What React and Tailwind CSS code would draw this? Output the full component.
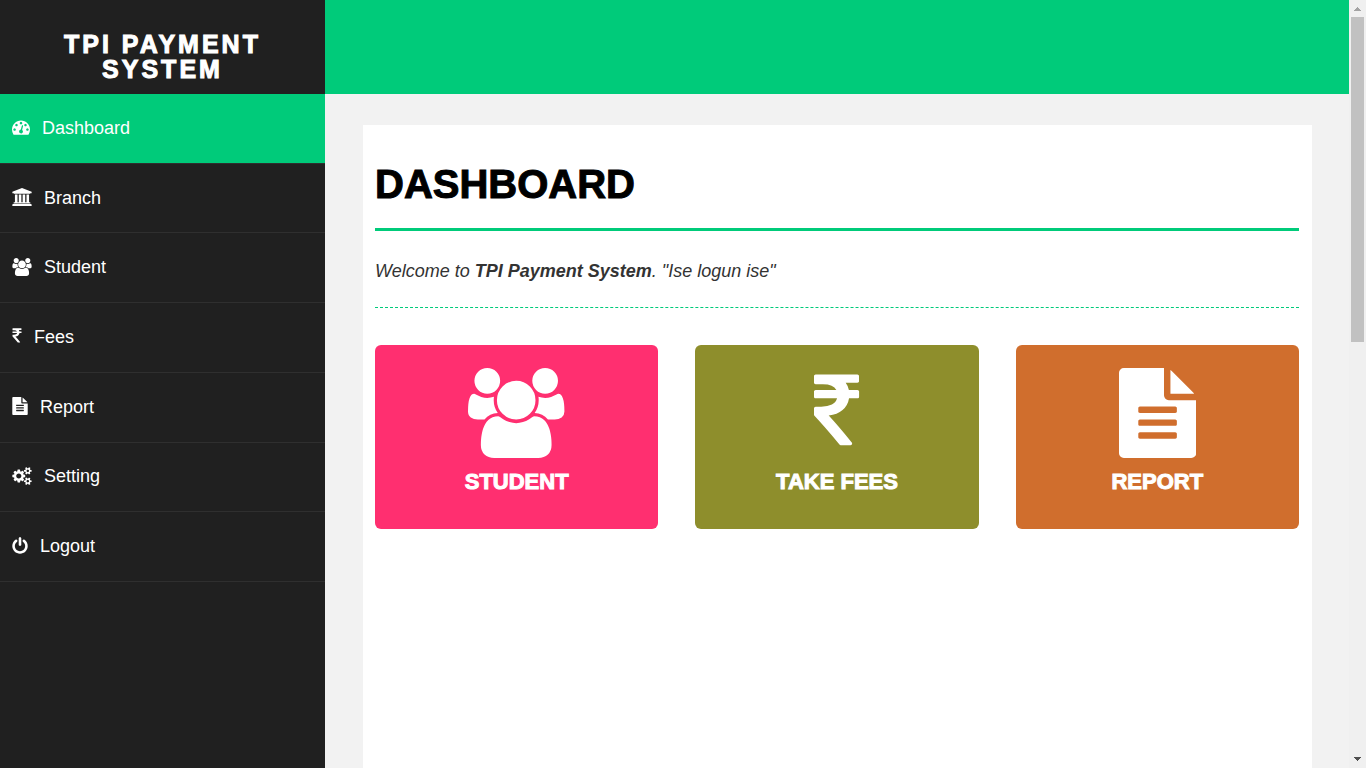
import React, { useState } from 'react';

const icons = {
  dashboard: {
    viewBox: '0 0 1792 1792',
    small: 'w-[18px]',
    path: 'M384 1152q0-53-37.5-90.5t-90.5-37.5-90.5 37.5-37.5 90.5 37.5 90.5 90.5 37.5 90.5-37.5 37.5-90.5zm192-448q0-53-37.5-90.5t-90.5-37.5-90.5 37.5-37.5 90.5 37.5 90.5 90.5 37.5 90.5-37.5 37.5-90.5zm428 481l101-382q6-26-7.5-48.5t-38.5-29.5-48 6.5-30 39.5l-101 382q-60 5-107 43.5t-63 98.5q-20 77 20 146t117 89 146-20 89-117q16-60-6-117t-72-91zm660-33q0-53-37.5-90.5t-90.5-37.5-90.5 37.5-37.5 90.5 37.5 90.5 90.5 37.5 90.5-37.5 37.5-90.5zm-640-640q0-53-37.5-90.5t-90.5-37.5-90.5 37.5-37.5 90.5 37.5 90.5 90.5 37.5 90.5-37.5 37.5-90.5zm448 192q0-53-37.5-90.5t-90.5-37.5-90.5 37.5-37.5 90.5 37.5 90.5 90.5 37.5 90.5-37.5 37.5-90.5zm320 448q0 261-141 483-19 29-54 29h-1402q-35 0-54-29-141-221-141-483 0-182 71-348t191-286 286-191 348-71 348 71 286 191 191 286 71 348z'
  },
  university: {
    viewBox: '0 0 1920 1792',
    small: 'w-5',
    path: 'M960 0l960 384v128h-128q0 26-20.5 45t-48.5 19h-1526q-28 0-48.5-19t-20.5-45h-128v-128zM256 640h256v768h128v-768h256v768h128v-768h256v768h128v-768h256v768h59q28 0 48.5 19t20.5 45v64h-1664v-64q0-26 20.5-45t48.5-19h59v-768zM1851 1600q28 0 48.5 19t20.5 45v128h-1920v-128q0-26 20.5-45t48.5-19h1782z'
  },
  users: {
    viewBox: '64 0 1920 1792',
    small: 'w-5',
    path: 'M657 896q-162 5-265 128h-134q-82 0-138-40.5t-56-118.5q0-353 124-353 6 0 43.5 21t97.5 42.5 119 21.5q67 0 133-23-5 37-5 66 0 139 81 256zm1071 637q0 120-73 189.500t-194 69.500h-874q-121 0-194-69.500t-73-189.500q0-53 3.500-103.500t14-109 26.500-108.500 43-97.500 62-81 85.500-53.500 111.500-20q10 0 43 21.500t73 48 107 48 135 21.500 135-21.500 107-48 73-48 43-21.500q61 0 111.500 20t85.500 53.500 62 81 43 97.500 26.500 108.500 14 109 3.500 103.500zm-1024-1277q0 106-75 181t-181 75-181-75-75-181 75-181 181-75 181 75 75 181zm704 384q0 159-112.5 271.500t-271.500 112.500-271.500-112.500-112.500-271.500 112.500-271.500 271.500-112.500 271.500 112.500 112.500 271.500zm576 225q0 78-56 118.500t-138 40.500h-134q-103-123-265-128 81-117 81-256 0-29-5-66 66 23 133 23 59 0 119-21.500t97.500-42.500 43.500-21q124 0 124 353zm-128-609q0 106-75 181t-181 75-181-75-75-181 75-181 181-75 181 75 75 181z'
  },
  rupee: {
    viewBox: '447 0 898 1792',
    small: 'w-[10px]',
    path: 'M1345 470v102q0 14-9 23t-23 9h-168q-23 144-129 234t-276 110q167 178 459 536 14 16 4 34-8 18-29 18h-195q-16 0-25-12-306-367-498-571-9-9-9-22v-127q0-13 9.5-22.5t22.5-9.5h112q132 0 212.5-43t102.5-125h-427q-14 0-23-9t-9-23v-102q0-14 9-23t23-9h413q-57-113-268-113h-145q-13 0-22.5-9.5t-9.5-22.5v-133q0-14 9-23t23-9h832q14 0 23 9t9 23v102q0 14-9 23t-23 9h-233q47 61 64 144h171q14 0 23 9t9 23z'
  },
  file: {
    viewBox: '128 0 1536 1792',
    small: 'w-4',
    path: 'M1596 476q14 14 28 36h-472v-472q22 14 36 28zm-476 164h544v1056q0 40-28 68t-68 28h-1344q-40 0-68-28t-28-68v-1600q0-40 28-68t68-28h800v544q0 40 28 68t68 28zm160 736v-64q0-14-9-23t-23-9h-704q-14 0-23 9t-9 23v64q0 14 9 23t23 9h704q14 0 23-9t9-23zm0-256v-64q0-14-9-23t-23-9h-704q-14 0-23 9t-9 23v64q0 14 9 23t23 9h704q14 0 23-9t9-23zm0-256v-64q0-14-9-23t-23-9h-704q-14 0-23 9t-9 23v64q0 14 9 23t23 9h704q14 0 23-9t9-23z'
  },
  cogs: {
    viewBox: '-64 0 1920 1792',
    small: 'w-5',
    path: 'M832 896q0-106-75-181t-181-75-181 75-75 181 75 181 181 75 181-75 75-181zm768 512q0-52-38-90t-90-38-90 38-38 90q0 53 37.5 90.5t90.5 37.5 90.5-37.5 37.5-90.5zm0-1024q0-52-38-90t-90-38-90 38-38 90q0 53 37.5 90.5t90.5 37.5 90.5-37.5 37.5-90.5zm-384 421v185q0 10-7 19.5t-16 10.5l-155 24q-11 35-32 76 34 48 90 115 7 11 7 20 0 12-7 19-23 30-82.5 89.5t-78.5 59.5q-11 0-21-7l-115-90q-37 19-77 31-11 108-23 155-7 24-30 24h-186q-11 0-20-7.5t-10-17.5l-23-153q-34-10-75-31l-118 89q-7 7-20 7-11 0-21-8-144-133-144-160 0-9 7-19 10-14 41-53t47-61q-23-44-35-82l-152-24q-10-1-17-9.5t-7-19.5v-185q0-10 7-19.5t16-10.5l155-24q11-35 32-76-34-48-90-115-7-11-7-20 0-12 7-20 22-30 82-89t79-59q11 0 21 7l115 90q34-18 77-32 11-108 23-154 7-24 30-24h186q11 0 20 7.5t10 17.5l23 153q34 10 75 31l118-89q8-7 20-7 11 0 21 8 144 133 144 160 0 8-7 19-12 16-42 54t-45 60q23 48 34 82l152 23q10 2 17 10.5t7 19.5zm640 533v140q0 16-149 31-12 27-30 52 51 113 51 138 0 4-4 7-122 71-124 71-8 0-46-47t-52-68q-20 2-30 2t-30-2q-14 21-52 68t-46 47q-2 0-124-71-4-3-4-7 0-25 51-138-18-25-30-52-149-15-149-31v-140q0-16 149-31 13-29 30-52-51-113-51-138 0-4 4-7 4-2 35-20t59-34 30-16q8 0 46 46.5t52 67.5q20-2 30-2t30 2q51-71 92-112l6-2q4 0 124 70 4 3 4 7 0 25-51 138 17 23 30 52 149 15 149 31zm0-1024v140q0 16-149 31-12 27-30 52 51 113 51 138 0 4-4 7-122 71-124 71-8 0-46-47t-52-68q-20 2-30 2t-30-2q-14 21-52 68t-46 47q-2 0-124-71-4-3-4-7 0-25 51-138-18-25-30-52-149-15-149-31v-140q0-16 149-31 13-29 30-52-51-113-51-138 0-4 4-7 4-2 35-20t59-34 30-16q8 0 46 46.5t52 67.5q20-2 30-2t30 2q51-71 92-112l6-2q4 0 124 70 4 3 4 7 0 25-51 138 17 23 30 52 149 15 149 31z'
  },
  power: {
    viewBox: '128 0 1536 1792',
    small: 'w-4',
    path: 'M1664 896q0 156-61 298t-164 245-245 164-298 61-298-61-245-164-164-245-61-298q0-182 80.5-343t226.5-270q43-32 95.5-25t83.5 50q32 42 24.5 94.5t-49.5 84.5q-98 74-151.5 181t-53.5 228q0 104 40.5 198.5t109.5 163.5 163.5 109.5 198.5 40.5 198.5-40.5 163.5-109.5 109.5-163.5 40.5-198.5q0-121-53.5-228t-151.5-181q-42-32-49.5-84.5t24.5-94.5q31-43 84-50t95 25q146 109 226.5 270t80.5 343zm-640-768v640q0 52-38 90t-90 38-90-38-38-90v-640q0-52 38-90t90-38 90 38 38 90z'
  }
};

const menu = [
  { label: 'Dashboard', icon: 'dashboard' },
  { label: 'Branch', icon: 'university' },
  { label: 'Student', icon: 'users' },
  { label: 'Fees', icon: 'rupee' },
  { label: 'Report', icon: 'file' },
  { label: 'Setting', icon: 'cogs' },
  { label: 'Logout', icon: 'power' }
];

const cards = [
  { label: 'Student', icon: 'users', color: 'bg-[#ff2f70]' },
  { label: 'Take Fees', icon: 'rupee', color: 'bg-[#8e8e2c]' },
  { label: 'Report', icon: 'file', color: 'bg-[#d06e2d]' }
];

const Icon = ({ name, className }) => (
  <svg viewBox={icons[name].viewBox} className={className} fill="currentColor" aria-hidden="true">
    <path d={icons[name].path} />
  </svg>
);

const Sidebar = () => {
  const [active, setActive] = useState('Dashboard');

  return (
    <aside className="w-[325px] shrink-0 bg-[#202020] text-white">
      <div className="h-[94px] pt-8 px-10 text-center">
        <h2 className="text-[25px] leading-[25px] font-black uppercase tracking-[3px] [-webkit-text-stroke:1px_currentColor]">
          TPI Payment System
        </h2>
      </div>
      <nav>
        <ul className="grid auto-rows-fr h-[488px]">
          {menu.map((item) => (
            <li key={item.label} className="border-b border-[#2f2f2f]">
              <a
                href="#"
                onClick={() => setActive(item.label)}
                className={`flex items-center gap-3 h-full px-3 text-[18px] ${
                  active === item.label ? 'bg-[#00cb7a]' : ''
                }`}
              >
                <Icon name={item.icon} className={`h-[18px] mb-0.5 ${icons[item.icon].small}`} />
                {item.label}
              </a>
            </li>
          ))}
        </ul>
      </nav>
    </aside>
  );
};

const ScrollBar = () => (
  <div className="w-[17px] shrink-0 flex flex-col items-center bg-[#f0f0f0]">
    <svg viewBox="0 0 17 17" className="w-[17px] h-[17px]" shapeRendering="crispEdges" aria-hidden="true">
      <path d="M8 7h1v1h1v1h1v1h1v1H5v-1h1V9h1V8h1z" fill="#a3a3a3" />
    </svg>
    <div className="w-[13px] h-[325px] bg-[#c1c1c1]" />
    <svg viewBox="0 0 17 17" className="w-[17px] h-[17px] mt-auto" shapeRendering="crispEdges" aria-hidden="true">
      <path d="M5 6h7v1h-1v1h-1v1H9v1H8V9H7V8H6V7H5z" fill="#505050" />
    </svg>
  </div>
);

const App = () => {
  return (
    <div className="flex h-screen overflow-hidden bg-[#f2f2f2] font-['Liberation_Sans',Arial,sans-serif]">
      <Sidebar />

      <div className="flex-1 flex flex-col">
        <header className="h-[94px] shrink-0 bg-[#00cb7a]" />

        <main className="flex-1 mt-[31px] ml-[38px] mr-[37px] pl-3 pr-[13px] pt-[35px] bg-white">
          <h1 className="pb-5 text-[40px] leading-[48px] font-black uppercase text-black border-b-3 border-[#00cb7a] [-webkit-text-stroke:1px_currentColor]">
            Dashboard
          </h1>
          <p className="pt-[30px] pb-[26px] text-[18px] leading-5 italic text-[#333333] border-b border-dashed border-[#00cb7a]">
            Welcome to <strong>TPI Payment System</strong>. "Ise logun ise"
          </p>

          <div className="grid grid-cols-3 gap-[37px] mt-[37px]">
            {cards.map((card) => (
              <a
                key={card.label}
                href="#"
                className={`flex flex-col items-center h-[184px] pt-[23px] rounded-md text-white ${card.color}`}
              >
                <Icon name={card.icon} className="h-[90px]" />
                <h3 className="mt-3 text-[22px] leading-6 font-black uppercase [-webkit-text-stroke:1px_currentColor]">
                  {card.label}
                </h3>
              </a>
            ))}
          </div>
        </main>
      </div>

      <ScrollBar />
    </div>
  );
};

export default App;
